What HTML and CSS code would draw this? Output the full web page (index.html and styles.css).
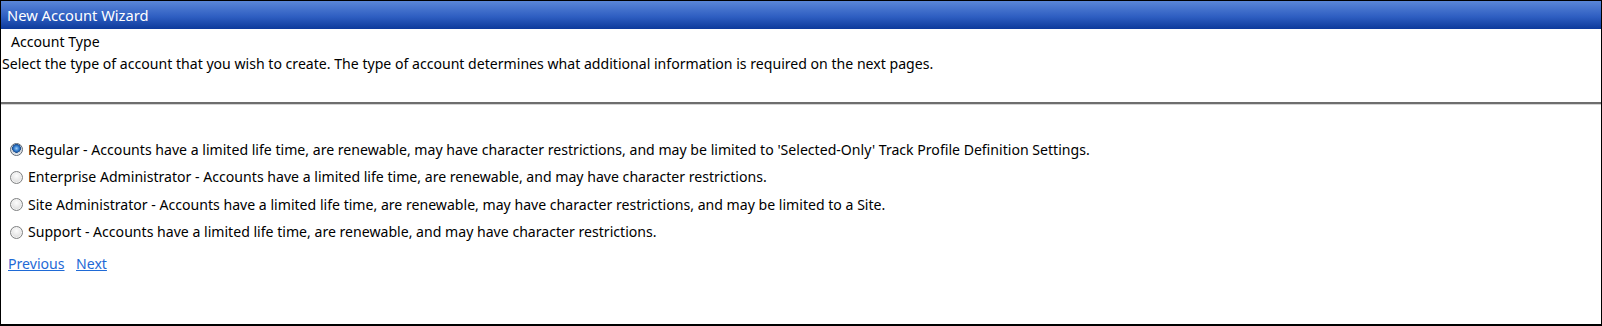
FILE: index.html
```html
<!DOCTYPE html>
<html>
<head>
<meta charset="utf-8">
<link rel="stylesheet" href="styles.css">
</head>
<body>
<div class="wizard">
  <div class="titlebar">New Account Wizard</div>
  <div class="content">
    <div class="step-title">Account Type</div>
    <div class="step-desc">Select the type of account that you wish to create. The type of account determines what additional information is required on the next pages.</div>
    <hr class="divider">
    <div class="options">
      <label class="option"><input type="radio" name="acct" checked><span>Regular - Accounts have a limited life time, are renewable, may have character restrictions, and may be limited to 'Selected-Only' Track Profile Definition Settings.</span></label>
      <label class="option"><input type="radio" name="acct"><span>Enterprise Administrator - Accounts have a limited life time, are renewable, and may have character restrictions.</span></label>
      <label class="option"><input type="radio" name="acct"><span>Site Administrator - Accounts have a limited life time, are renewable, may have character restrictions, and may be limited to a Site.</span></label>
      <label class="option"><input type="radio" name="acct"><span>Support - Accounts have a limited life time, are renewable, and may have character restrictions.</span></label>
    </div>
    <div class="nav"><a href="#">Previous</a><a href="#">Next</a></div>
  </div>
</div>
</body>
</html>
```
FILE: styles.css
```css
html, body { margin: 0; padding: 0; background: #fff; }
body { font-family: "Noto Sans", "Open Sans", sans-serif; font-size: 14.1px; color: #000; }
.wizard { width: 1602px; height: 326px; box-sizing: border-box; border: 1px solid #000; border-bottom-width: 2px; display: flex; flex-direction: column; }
.titlebar { height: 28px; flex: none; background: linear-gradient(#5a86d7, #2f5fc2 55%, #0d3a9b); color: #fff; padding-left: 6px; line-height: 28px; font-size: 14.7px; }
.content { padding-left: 0; }
.step-title { padding-left: 10px; margin-top: 3px; line-height: 20px; }
.step-desc { line-height: 20px; padding-left: 1px; margin-top: 1.5px; }
.divider { margin: 28.5px 0 0; border: 0; border-top: 2px solid #6e6e6e; border-bottom: 1px solid #d4d4d4; height: 0; }
.options { margin-top: 34.5px; padding-left: 9px; display: flex; flex-direction: column; gap: 7.5px; }
.option { display: flex; align-items: center; gap: 5px; line-height: 20px; }
.option input { -webkit-appearance: none; appearance: none; margin: 0; width: 13px; height: 13px; border-radius: 50%; border: 1px solid #7f8182; box-sizing: border-box; background: radial-gradient(circle at 50% 35%, #fdfdfd 0, #e6e6e6 55%, #cbcbcb 100%); box-shadow: inset 0 0 0 1px #f3f3f3; }
.option input:checked { border-color: #5f6873; background: radial-gradient(circle at 50% 40%, #9fcdf3 0, #2f7bcf 30%, #1d4f8f 48%, #c9d0d8 53%, #eef0f2 75%, #c3c8cd 100%); box-shadow: none; }
.nav { padding-left: 7px; margin-top: 11.5px; display: flex; gap: 11.5px; line-height: 20px; }
.nav a { color: #1f6ad6; text-decoration: underline; }
```
